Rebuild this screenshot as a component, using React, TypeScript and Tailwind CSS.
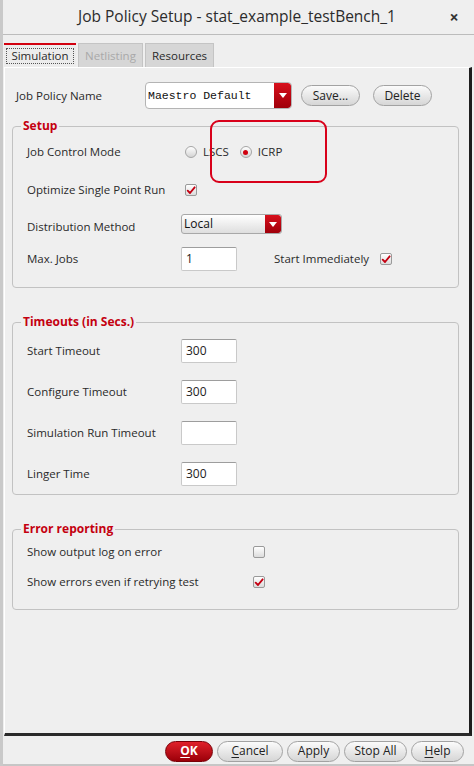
import React from "react";

const ui = { fontFamily: '"Open Sans", "Noto Sans", sans-serif' };
const mono = { fontFamily: '"Liberation Mono", "DejaVu Sans Mono", monospace' };

function Check({ checked }: { checked: boolean }) {
  return (
    <span className="relative inline-flex h-[12px] w-[12px] items-center justify-center rounded-[2px] border border-[#9a9a9a] bg-gradient-to-b from-white to-[#dcdcdc]">
      {checked && (
        <svg viewBox="0 0 12 12" className="h-[11px] w-[11px]">
          <path d="M2 6.2 L4.8 9 L10.4 2.2" fill="none" stroke="#c40012" strokeWidth="2.2" strokeLinecap="round" strokeLinejoin="round" />
        </svg>
      )}
    </span>
  );
}

function Radio({ on, label }: { on: boolean; label: string }) {
  return (
    <span className="flex items-center gap-[6px]">
      <span className="flex h-[12px] w-[12px] items-center justify-center rounded-full border border-[#a6a6a6] bg-gradient-to-b from-white to-[#d4d4d4]">
        {on && <span className="h-[5px] w-[5px] rounded-full bg-[#d0000f]" />}
      </span>
      <span>{label}</span>
    </span>
  );
}

function DropArrow({ w }: { w: number }) {
  return (
    <span
      className="flex h-full items-center justify-center rounded-r-[3px] bg-gradient-to-b from-[#d8101c] to-[#a0000a]"
      style={{ width: w }}
    >
      <svg viewBox="0 0 8 5" className="h-[5px] w-[8px]">
        <path d="M0 0 L8 0 L4 5 Z" fill="#fff" />
      </svg>
    </span>
  );
}

function Pill({ children, w, red }: { children: React.ReactNode; w: number; red?: boolean }) {
  return (
    <button
      className={
        red
          ? "flex h-[21px] items-center justify-center rounded-full border border-[#7a0008] bg-gradient-to-b from-[#e0202a] to-[#9c0008] text-[12px] font-bold text-white"
          : "flex h-[21px] items-center justify-center rounded-full border border-[#a2a2a2] bg-gradient-to-b from-[#fbfbfb] to-[#d6d6d6] text-[12px] text-[#222]"
      }
      style={{ width: w }}
    >
      {children}
    </button>
  );
}

function Field({ value, w = 56 }: { value?: string; w?: number }) {
  return (
    <div
      className="flex h-[24px] items-center rounded-[2px] border border-[#c9c9c9] border-t-[#9d9d9d] bg-white px-[4px] text-[12px] text-[#222]"
      style={{ width: w }}
    >
      {value}
    </div>
  );
}

function Group({ title, children, className }: { title: string; children: React.ReactNode; className?: string }) {
  return (
    <fieldset className={"ml-[7px] w-[447px] rounded-[4px] border border-[#c2c2c2] px-[14px] " + (className ?? "")}>
      <legend className="ml-[-6px] px-[2px] text-[12px] leading-[16px] font-bold text-[#c4000f]">{title}</legend>
      {children}
    </fieldset>
  );
}

export default function App() {
  return (
    <div className="h-[766px] w-[474px] overflow-hidden border-l-[3px] border-[#c9c9c9] bg-[#efefef] text-[11.5px] text-[#2a2a2a]" style={ui}>
      {/* title bar */}
      <div className="flex h-[35px] items-center border-b border-[#bcbcbc]">
        <div className="w-[37px]" />
        <div className="flex-1 text-center text-[15.5px] text-[#2b2b2b]">Job Policy Setup - stat_example_testBench_1</div>
        <div className="w-[40px] text-center text-[16px] font-bold text-[#333]">×</div>
      </div>

      {/* tabs */}
      <div className="mt-[8px] flex h-[24px] gap-[2px] pl-[1px]">
        <div className="flex w-[72px] items-center justify-center border-t-2 border-[#d2000f] bg-[#ececec]">
          <span className="border border-dotted border-[#555] px-[4px] leading-[14px]">Simulation</span>
        </div>
        <div className="flex w-[65px] items-center justify-center border border-b-0 border-[#c4c4c4] bg-[#d6d6d6] text-[#a9a9a9]">Netlisting</div>
        <div className="flex w-[69px] items-center justify-center border border-b-0 border-[#c4c4c4] bg-[#d6d6d6]">Resources</div>
      </div>

      {/* tab panel */}
      <div className="ml-[1px] h-[669px] w-[468px] border-t border-l border-white border-r-[3px] border-b-[3px] border-r-[#1e1e1e] border-b-[#2a2a2a] pt-[14px]">
        <div className="flex h-[27px] items-center">
          <span className="w-[140px] pl-[11px]">Job Policy Name</span>
          <div className="flex h-[27px] w-[147px] items-center justify-between overflow-hidden rounded-[4px] border border-[#b4b4b4] bg-white">
            <span className="pl-[2px] text-[11.5px] text-[#111]" style={mono}>Maestro Default</span>
            <DropArrow w={17} />
          </div>
          <div className="ml-[9px]"><Pill w={59}>Save...</Pill></div>
          <div className="ml-[13px]"><Pill w={59}>Delete</Pill></div>
        </div>

        <Group title="Setup" className="relative mt-[9px] pb-[16px]">
          <div className="mt-[4px] flex h-[28px] items-center">
            <span className="w-[158px]">Job Control Mode</span>
            <div className="flex gap-[11px]">
              <Radio on={false} label="LSCS" />
              <Radio on label="ICRP" />
            </div>
          </div>
          {/* annotation around the ICRP option */}
          <div className="pointer-events-none absolute top-[-14px] left-[197px] h-[63px] w-[117px] rounded-[9px] border-2 border-[#d8001a]" />
          <div className="mt-[10px] flex h-[28px] items-center">
            <span className="w-[158px]">Optimize Single Point Run</span>
            <Check checked />
          </div>
          <div className="mt-[6px] flex h-[28px] items-center">
            <span className="w-[154px] pt-[6px]">Distribution Method</span>
            <div className="flex h-[20px] w-[101px] items-center justify-between overflow-hidden rounded-[3px] border border-[#a8a8a8] bg-gradient-to-b from-white to-[#dedede]">
              <span className="pl-[2px] text-[12px] text-[#111]">Local</span>
              <DropArrow w={16} />
            </div>
          </div>
          <div className="mt-[9px] flex h-[24px] items-center">
            <span className="w-[154px]">Max. Jobs</span>
            <Field value="1" />
            <span className="ml-[37px] w-[106px]">Start Immediately</span>
            <Check checked />
          </div>
        </Group>

        <Group title="Timeouts (in Secs.)" className="mt-[26px] pb-[8px]">
          <div className="mt-[9px] flex flex-col gap-[17px]">
            {[
              ["Start Timeout", "300"],
              ["Configure Timeout", "300"],
              ["Simulation Run Timeout", ""],
              ["Linger Time", "300"],
            ].map(([label, v]) => (
              <div key={label} className="flex h-[24px] items-center">
                <span className="w-[154px]">{label}</span>
                <Field value={v} />
              </div>
            ))}
          </div>
        </Group>

        <Group title="Error reporting" className="mt-[26px] pb-[17px]">
          <div className="mt-[5px] flex h-[20px] items-center">
            <span className="w-[226px]">Show output log on error</span>
            <Check checked={false} />
          </div>
          <div className="mt-[10px] flex h-[20px] items-center">
            <span className="w-[226px]">Show errors even if retrying test</span>
            <Check checked />
          </div>
        </Group>
      </div>

      {/* dialog buttons */}
      <div className="mt-[4px] flex h-[22px] items-center gap-[4px] pl-[162px]">
        <Pill w={48} red>
          <span className="underline decoration-1 underline-offset-2">O</span>K
        </Pill>
        <Pill w={66}>
          <span className="underline decoration-1 underline-offset-2">C</span>ancel
        </Pill>
        <Pill w={53}>Apply</Pill>
        <Pill w={63}>Stop All</Pill>
        <Pill w={53}>
          <span className="underline decoration-1 underline-offset-2">H</span>elp
        </Pill>
      </div>
      <div className="mt-[2px] h-[6px] bg-[#c6c6c6]" />
    </div>
  );
}
